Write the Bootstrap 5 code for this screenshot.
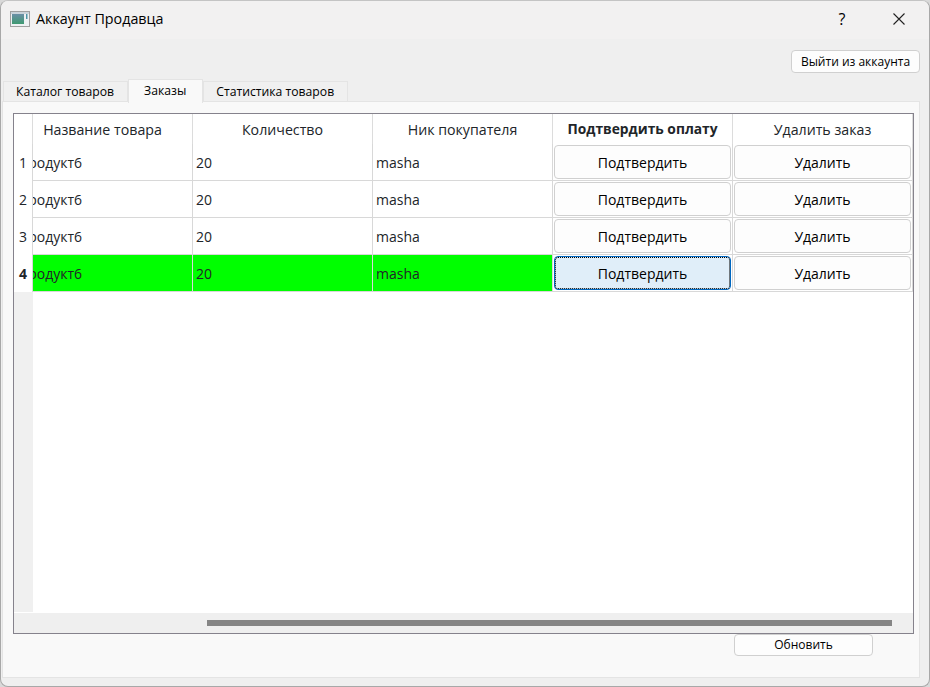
<!DOCTYPE html>
<html lang="ru">
<head>
    <meta charset="UTF-8">
    <meta name="viewport" content="width=device-width, initial-scale=1.0">
    <title>Аккаунт Продавца</title>
    <link href="https://cdn.jsdelivr.net/npm/bootstrap@5.3.2/dist/css/bootstrap.min.css" rel="stylesheet">
    <style>
        html, body {
            height: 100%;
            background-color: #d9d9d9;
            font-family: "Open Sans", "Noto Sans", sans-serif;
            color: #000;
        }
        .app-window {
            width: 930px;
            height: 687px;
            background-color: #efefef;
            border: 1px solid #a8a8a8;
            border-top-color: #c4c4c4;
            border-radius: 8px;
            overflow: hidden;
        }
        .title-bar { height: 38px; background-color: #f2f1f1; padding: 0 0 2px 9px; }
        .title-text { font-size: 14.3px; margin-left: 6px; }
        .title-btn { width: 46px; height: 36px; }
        .help-btn { font-size: 16px; margin-right: 11px; }
        .close-btn { margin-right: 7px; }
        .top-row { height: 39px; padding: 11px 9px 0 0; }
        .qt-btn {
            font-size: 12px;
            line-height: 1;
            color: #000;
            background-color: #fdfdfd;
            border: 1px solid #d0d0d0;
            border-radius: 4px;
            padding: 0;
        }
        .logout-btn { width: 129px; height: 23px; }
        .refresh-btn { width: 139px; height: 22px; }
        .qt-tabs { height: 23px; padding-left: 2px; border: 0; align-items: flex-end; }
        .qt-tabs .nav-link {
            font-size: 12.2px;
            line-height: 1;
            color: #000;
            height: 21px;
            padding: 4px 13px 0 12px;
            background-color: #f0f0f0;
            border: 1px solid #e4e4e4;
            border-bottom: 0;
            border-radius: 0;
            margin: 0;
        }
        .qt-tabs .nav-link.active {
            height: 24px;
            background-color: #f9f9f9;
            padding: 5px 16px 0 15px;
            border-color: #e4e4e4;
            position: relative;
            top: 1px;
        }
        .tab-panel {
            width: 918px;
            height: 577px;
            margin-left: 1px;
            background-color: #f9f9f9;
            border: 1px solid #e4e4e4;
            padding: 11px 0 0 10px;
        }
        .table-frame { width: 901px; height: 521px; border: 1px solid #85828c; background-color: #fff; }
        .qt-table { table-layout: fixed; border-collapse: separate; border-spacing: 0; width: 899px; height: 498px; margin: 0; font-size: 14px; }
        .qt-table th, .qt-table td { padding: 0; vertical-align: middle; border: 0; background-color: transparent; box-shadow: none; }
        .qt-table thead th { height: 30px; padding-top: 1px; font-weight: 400; font-size: 14.2px; text-align: center; border-right: 1px solid #dcdcdc; }
        .qt-table thead th.bold-head { font-weight: 700; font-size: 13.8px; }
        .qt-table thead th.name-head { padding-right: 20px; }
        .qt-table tbody tr.data-row td, .qt-table tbody tr.data-row th { height: 37px; }
        .qt-table tr.data-row td { border-right: 1px solid #d8d8d8; border-bottom: 1px solid #d8d8d8; }
        .qt-table td.text-cell { padding-left: 3px; overflow: hidden; white-space: nowrap; }
        .qt-table td.name-cell { padding-left: 0; }
        .name-cell span { display: block; margin-left: -15px; }
        .qt-table th.row-head { font-weight: 400; text-align: center; border-right: 1px solid #d8d8d8; }
        .qt-table th.row-head.current { font-weight: 700; }
        .qt-table tr.paid td.text-cell { background-color: #00ff00; }
        .qt-table td.btn-cell { padding: 1px; }
        .cell-btn { display: block; width: 100%; height: 34px; padding-top: 2px; font-size: 14px; border-color: #d0d0d0; }
        .cell-btn.focused {
            background-color: #e0eef9;
            border-color: #0067c0;
            outline: 1px dotted #000;
            outline-offset: -2px;
        }
        .qt-table th.row-filler { background-color: #f0f0f0; border-right: 0; }
        .h-scroll { height: 20px; background-color: #efefef; margin-top: 1px; padding: 7px 21px 0 193px; }
        .h-scroll div { height: 6px; background-color: #858585; }
        .bottom-row { padding: 0 46px 0 0; }
    </style>
</head>
<body class="m-0">
    <div class="app-window d-flex flex-column">
        <div class="title-bar d-flex align-items-center flex-shrink-0">
            <svg width="20" height="16" viewBox="0 0 20 16">
                <defs>
                    <linearGradient id="iconFill" x1="0" y1="0" x2="0" y2="1">
                        <stop offset="0" stop-color="#6a8fa6"/>
                        <stop offset="1" stop-color="#3f9a72"/>
                    </linearGradient>
                </defs>
                <rect x="0.5" y="0.5" width="19" height="15" fill="#eef1f3" stroke="#a0a0a0"/>
                <rect x="1" y="1" width="18" height="2" fill="#c9d3da"/>
                <rect x="2" y="3" width="12" height="10" fill="url(#iconFill)"/>
                <rect x="16" y="3" width="1.5" height="5" fill="#4f96a8"/>
            </svg>
            <span class="title-text">Аккаунт Продавца</span>
            <div class="ms-auto d-flex">
                <div class="title-btn help-btn d-flex align-items-center justify-content-center">?</div>
                <div class="title-btn close-btn d-flex align-items-center justify-content-center">
                    <svg width="12" height="12" viewBox="0 0 12 12"><path d="M0.5 0.5 L11.5 11.5 M11.5 0.5 L0.5 11.5" stroke="#222" stroke-width="1.1" fill="none"/></svg>
                </div>
            </div>
        </div>

        <div class="top-row d-flex justify-content-end flex-shrink-0">
            <button type="button" class="btn qt-btn logout-btn">Выйти из аккаунта</button>
        </div>

        <ul class="nav nav-tabs qt-tabs flex-shrink-0">
            <li class="nav-item"><a class="nav-link" href="#">Каталог товаров</a></li>
            <li class="nav-item"><a class="nav-link active" href="#">Заказы</a></li>
            <li class="nav-item"><a class="nav-link" href="#">Статистика товаров</a></li>
        </ul>

        <div class="tab-panel flex-shrink-0">
            <div class="table-frame">
                <table class="table qt-table">
                    <colgroup>
                        <col style="width:19px">
                        <col style="width:160px">
                        <col style="width:180px">
                        <col style="width:180px">
                        <col style="width:180px">
                        <col style="width:180px">
                    </colgroup>
                    <thead>
                        <tr>
                            <th class="row-corner"></th>
                            <th class="name-head">Название товара</th>
                            <th>Количество</th>
                            <th>Ник покупателя</th>
                            <th class="bold-head">Подтвердить оплату</th>
                            <th>Удалить заказ</th>
                        </tr>
                    </thead>
                    <tbody>
                        <tr class="data-row">
                            <th class="row-head">1</th>
                            <td class="text-cell name-cell"><span>Продукт6</span></td>
                            <td class="text-cell">20</td>
                            <td class="text-cell">masha</td>
                            <td class="btn-cell"><button type="button" class="btn qt-btn cell-btn">Подтвердить</button></td>
                            <td class="btn-cell"><button type="button" class="btn qt-btn cell-btn">Удалить</button></td>
                        </tr>
                        <tr class="data-row">
                            <th class="row-head">2</th>
                            <td class="text-cell name-cell"><span>Продукт6</span></td>
                            <td class="text-cell">20</td>
                            <td class="text-cell">masha</td>
                            <td class="btn-cell"><button type="button" class="btn qt-btn cell-btn">Подтвердить</button></td>
                            <td class="btn-cell"><button type="button" class="btn qt-btn cell-btn">Удалить</button></td>
                        </tr>
                        <tr class="data-row">
                            <th class="row-head">3</th>
                            <td class="text-cell name-cell"><span>Продукт6</span></td>
                            <td class="text-cell">20</td>
                            <td class="text-cell">masha</td>
                            <td class="btn-cell"><button type="button" class="btn qt-btn cell-btn">Подтвердить</button></td>
                            <td class="btn-cell"><button type="button" class="btn qt-btn cell-btn">Удалить</button></td>
                        </tr>
                        <tr class="data-row paid">
                            <th class="row-head current">4</th>
                            <td class="text-cell name-cell"><span>Продукт6</span></td>
                            <td class="text-cell">20</td>
                            <td class="text-cell">masha</td>
                            <td class="btn-cell"><button type="button" class="btn qt-btn cell-btn focused">Подтвердить</button></td>
                            <td class="btn-cell"><button type="button" class="btn qt-btn cell-btn">Удалить</button></td>
                        </tr>
                        <tr>
                            <th class="row-filler"></th>
                            <td colspan="5"></td>
                        </tr>
                    </tbody>
                </table>
                <div class="h-scroll"><div></div></div>
            </div>
            <div class="bottom-row d-flex justify-content-end">
                <button type="button" class="btn qt-btn refresh-btn">Обновить</button>
            </div>
        </div>
    </div>
</body>
</html>
